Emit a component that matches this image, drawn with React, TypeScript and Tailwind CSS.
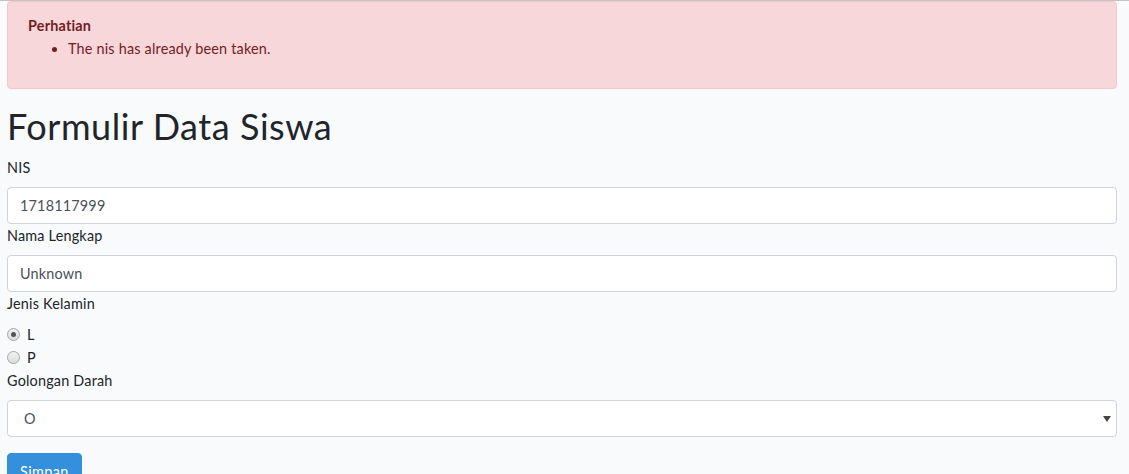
import React from "react";

const font = { fontFamily: "Lato, 'Noto Sans', sans-serif" };

function Radio({ checked, label }: { checked?: boolean; label: string }) {
  return (
    <div className="flex h-[23px] items-center">
      <span className="flex h-[13px] w-[13px] items-center justify-center rounded-full border border-[#a6a6a6] bg-gradient-to-b from-[#f2f2f2] to-[#dcdcdc]">
        {checked && <span className="h-[5px] w-[5px] rounded-full bg-[#555555]" />}
      </span>
      <span className="ml-[7px] text-[14.4px] text-[#212529]">{label}</span>
    </div>
  );
}

export default function App() {
  return (
    <div style={font} className="min-h-[474px] w-full border-t border-[#c4c4c4] bg-[#f8fafc] text-[14.4px] leading-[23px] tracking-[0.2px] text-[#212529]">
      <div className="pl-[7px] pr-[12px]">
        <div className="mb-4 rounded-[4px] border border-[#f5c6cb] bg-[#f8d7da] px-5 py-3 text-[#721c24]">
          <div className="font-bold">Perhatian</div>
          <ul className="mb-4 list-disc pl-10">
            <li>The nis has already been taken.</li>
          </ul>
        </div>
        <h1 className="mb-2 text-[36px] font-normal leading-[43px] tracking-[0.55px]">Formulir Data Siswa</h1>
        <form>
          <div className="mb-2">NIS</div>
          <div className="flex h-[37px] items-center rounded-[4px] border border-[#ced4da] bg-white px-3 text-[#495057]">1718117999</div>
          <div className="mb-2">Nama Lengkap</div>
          <div className="flex h-[37px] items-center rounded-[4px] border border-[#ced4da] bg-white px-3 text-[#495057]">Unknown</div>
          <div className="mb-2">Jenis Kelamin</div>
          <Radio checked label="L" />
          <Radio label="P" />
          <div className="mb-2">Golongan Darah</div>
          <div className="flex h-[37px] items-center justify-between rounded-[4px] border border-[#ced4da] bg-white pl-4 pr-[5px] text-[#495057]">
            <span>O</span>
            <svg width="8" height="6" viewBox="0 0 8 6">
              <path d="M0 0H8L4 6Z" fill="#444" />
            </svg>
          </div>
          <div className="mt-4">
            <button type="button" className="h-[37px] rounded-[4px] border border-[#3490dc] bg-[#3490dc] px-3 text-[14.4px] tracking-[0.4px] text-white">
              Simpan
            </button>
          </div>
        </form>
      </div>
    </div>
  );
}
